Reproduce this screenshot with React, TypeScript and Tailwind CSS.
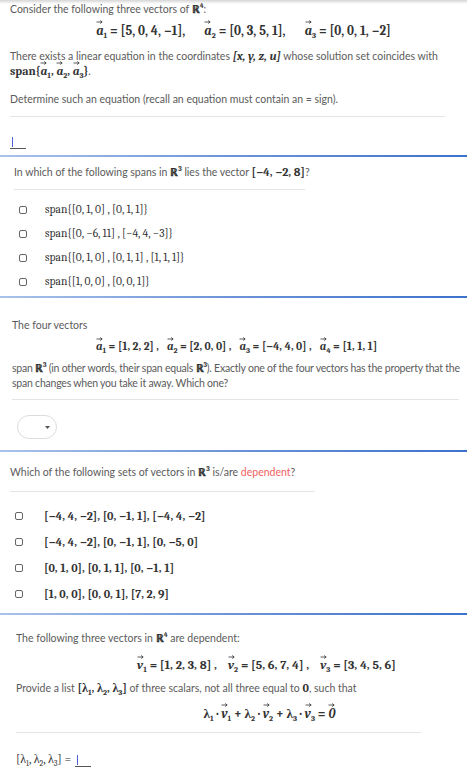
import React from 'react';

// Math helpers (approximating KaTeX rendering with a serif face)
const Sub = ({ c }: { c: string }) => (
  <span className="relative top-[3px] text-[8px] leading-none">{c}</span>
);

const Vec = ({ l, sub }: { l: string; sub?: string }) => (
  <span className="relative inline-block leading-none">
    <span className="italic">{l}</span>
    <svg className="absolute left-[0px] top-[-4px]" width="7" height="4" viewBox="0 0 7 4">
      <path d="M0.5 2 H6 M4.2 0.5 L6.2 2 L4.2 3.5" stroke="#333" strokeWidth="0.8" fill="none" />
    </svg>
    {sub && <Sub c={sub} />}
  </span>
);

const RR = ({ n }: { n: string }) => (
  <span className="font-serif font-bold text-[#333] text-[11px]">
    ℝ<span className="relative top-[-5px] text-[7px] leading-none">{n}</span>
  </span>
);

const Box = () => (
  <span className="inline-block w-[8px] h-[8px] border border-[#666] rounded-[2px]" />
);

const BlueRule = () => (
  <div className="h-[2px] w-full bg-gradient-to-r from-[#a9c2ea] via-[#6b93d8] to-[#3d72cc]" />
);

const GrayRule = ({ w }: { w: string }) => <div className={`h-px bg-[#e4e4e4] ${w}`} />;

const Answer = () => (
  <span className="inline-block w-[16px] h-[12px] border-b border-[#555] relative">
    <span className="absolute left-[2px] bottom-[1px] w-px h-[10px] bg-[#4d5fd6]" />
  </span>
);

export default function App() {
  const spans = [
    'span{[0, 1, 0] , [0, 1, 1]}',
    'span{[0, −6, 11] , [−4, 4, −3]}',
    'span{[0, 1, 0] , [0, 1, 1] , [1, 1, 1]}',
    'span{[1, 0, 0] , [0, 0, 1]}',
  ];
  const sets = [
    '[−4, 4, −2], [0, −1, 1], [−4, 4, −2]',
    '[−4, 4, −2], [0, −1, 1], [0, −5, 0]',
    '[0, 1, 0], [0, 1, 1], [0, −1, 1]',
    '[1, 0, 0], [0, 0, 1], [7, 2, 9]',
  ];

  return (
    <div className="relative w-[467px] h-[767px] bg-white text-[#5b5b5b] text-[10.5px] leading-4 font-[Lato] overflow-hidden">
      <div className="absolute top-0 left-0 right-0 h-[4px] bg-gradient-to-b from-[#d6d6d6] to-white" />

      {/* Question 1 */}
      <div className="pl-[10px] pt-px">
        <p>
          Consider the following three vectors of <RR n="4" />:
        </p>
        <div className="mt-[5px] flex justify-center gap-[19px] pl-[10px] font-serif text-[13px] font-bold text-[#333] h-[16px] items-center">
          <span><Vec l="a" sub="1" /> = [5, 0, 4, −1],</span>
          <span><Vec l="a" sub="2" /> = [0, 3, 5, 1],</span>
          <span><Vec l="a" sub="3" /> = [0, 0, 1, −2]</span>
        </div>
        <p className="mt-[10px] leading-[15px]">
          There exists a linear equation in the coordinates{' '}
          <span className="font-serif font-bold italic text-[#333] text-[12px]">[x, y, z, u]</span> whose solution set coincides with
          <br />
          <span className="font-serif font-bold text-[#333] text-[12px]">
            span{'{'}<Vec l="a" sub="1" />, <Vec l="a" sub="2" />, <Vec l="a" sub="3" />{'}'}
          </span>
          .
        </p>
        <p className="mt-[12px]">Determine such an equation (recall an equation must contain an = sign).</p>
        <div className="mt-[9px]">
          <GrayRule w="w-[435px]" />
        </div>
        <div className="mt-[20px] mb-[6px] h-[12px] flex">
          <Answer />
        </div>
      </div>
      <BlueRule />

      {/* Question 2 */}
      <div className="pl-[14px] pt-[7px]">
        <p>
          In which of the following spans in <RR n="3" /> lies the vector{' '}
          <span className="font-serif font-bold text-[#333] text-[12px]">[−4, −2, 8]</span>?
        </p>
        <div className="mt-[8px]">
          <GrayRule w="w-[291px]" />
        </div>
        <div className="mt-[12px] flex flex-col gap-[8px] pl-[5px]">
          {spans.map((s) => (
            <div key={s} className="flex items-center h-[16px]">
              <Box />
              <span className="ml-[18px] font-serif text-[11.5px] text-[#333]">{s}</span>
            </div>
          ))}
        </div>
        <div className="h-[6px]" />
      </div>
      <BlueRule />

      {/* Question 3 */}
      <div className="pl-[12px] pt-[19px]">
        <p>The four vectors</p>
        <div className="mt-[6px] h-[16px] flex items-center justify-center gap-[8px] pr-[6px] font-serif text-[11.5px] font-bold text-[#333]">
          <span><Vec l="a" sub="1" /> = [1, 2, 2] ,</span>
          <span><Vec l="a" sub="2" /> = [2, 0, 0] ,</span>
          <span><Vec l="a" sub="3" /> = [−4, 4, 0] ,</span>
          <span><Vec l="a" sub="4" /> = [1, 1, 1]</span>
        </div>
        <p className="mt-[6px] leading-[14px] tracking-[-0.22px] whitespace-nowrap">
          span <RR n="3" /> (in other words, their span equals <RR n="3" />). Exactly one of the four vectors has the property that the
          <br />
          span changes when you take it away. Which one?
        </p>
        <div className="mt-[9px]">
          <GrayRule w="w-[447px]" />
        </div>
        <div className="mt-[15px] mb-[11px] ml-[5px] w-[40px] h-[24px] rounded-full border border-[#dcdcdc] flex items-center justify-end pr-[6px]">
          <svg width="5" height="3" viewBox="0 0 5 3">
            <path d="M0 0 L5 0 L2.5 3 Z" fill="#555" />
          </svg>
        </div>
      </div>
      <BlueRule />

      {/* Question 4 */}
      <div className="pl-[10px] pt-[12px]">
        <p>
          Which of the following sets of vectors in <RR n="3" /> is/are <span className="text-[#f26161]">dependent</span>?
        </p>
        <div className="mt-[10px]">
          <GrayRule w="w-[305px]" />
        </div>
        <div className="mt-[16px] flex flex-col gap-[10px] pl-[5px]">
          {sets.map((s) => (
            <div key={s} className="flex items-center h-[16px]">
              <Box />
              <span className="ml-[21px] font-serif text-[12px] font-bold text-[#333]">{s}</span>
            </div>
          ))}
        </div>
        <div className="h-[11px]" />
      </div>
      <BlueRule />

      {/* Question 5 */}
      <div className="pl-[16px] pt-[15px]">
        <p>
          The following three vectors in <RR n="4" /> are dependent:
        </p>
        <div className="mt-[10px] h-[16px] flex items-center justify-center gap-[11px] pl-[50px] font-serif text-[12.5px] font-bold text-[#333]">
          <span><Vec l="v" sub="1" /> = [1, 2, 3, 8] ,</span>
          <span><Vec l="v" sub="2" /> = [5, 6, 7, 4] ,</span>
          <span><Vec l="v" sub="3" /> = [3, 4, 5, 6]</span>
        </div>
        <p className="mt-[7px]">
          Provide a list{' '}
          <span className="font-serif font-bold text-[#333] text-[12px]">
            [λ<Sub c="1" />, λ<Sub c="2" />, λ<Sub c="3" />]
          </span>{' '}
          of three scalars, not all three equal to{' '}
          <span className="font-serif font-bold text-[#333] text-[12px]">0</span>, such that
        </p>
        <div className="mt-[10px] h-[16px] flex items-center justify-center pl-[56px] font-serif text-[13px] font-bold text-[#333]">
          <span>
            λ<Sub c="1" /> · <Vec l="v" sub="1" /> + λ<Sub c="2" /> · <Vec l="v" sub="2" /> + λ<Sub c="3" /> ·{' '}
            <Vec l="v" sub="3" /> = <Vec l="0" />
          </span>
        </div>
        <div className="mt-[10px]">
          <GrayRule w="w-[405px]" />
        </div>
        <div className="mt-[18px] flex items-end gap-[4px] font-serif text-[12px] text-[#333]">
          <span>
            [λ<Sub c="1" />, λ<Sub c="2" />, λ<Sub c="3" />] =
          </span>
          <Answer />
        </div>
      </div>
    </div>
  );
}
